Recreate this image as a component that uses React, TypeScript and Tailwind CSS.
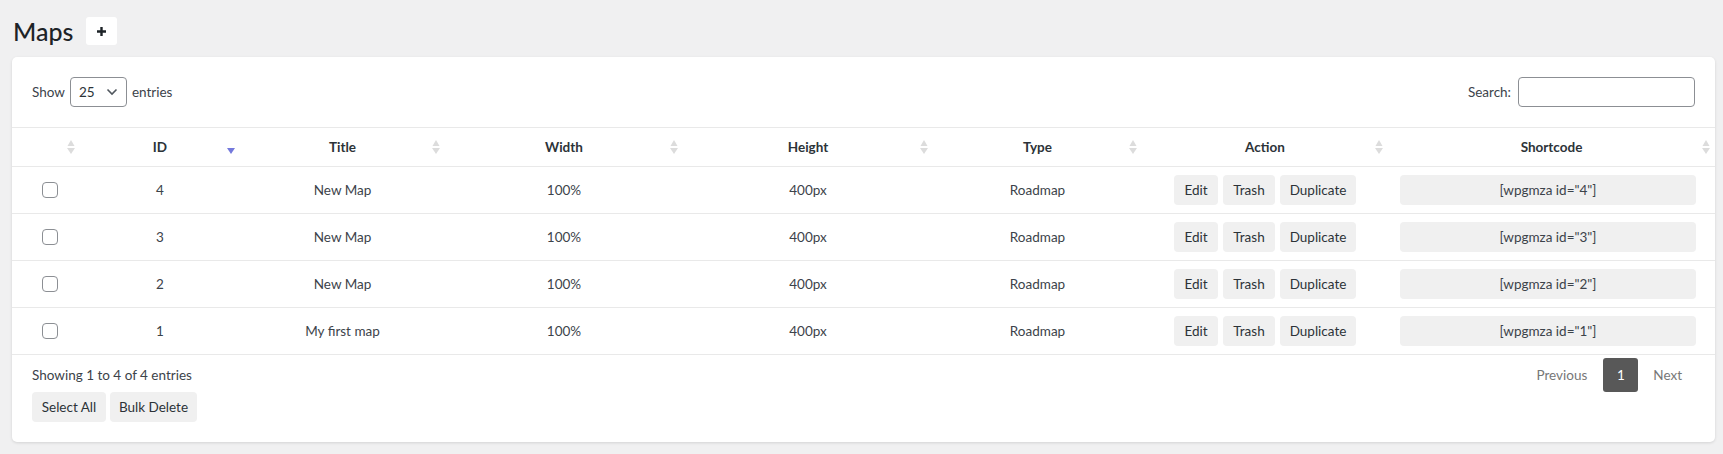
const maps = [
  { id: 4, title: "New Map" },
  { id: 3, title: "New Map" },
  { id: 2, title: "New Map" },
  { id: 1, title: "My first map" },
];

const columns = ["", "ID", "Title", "Width", "Height", "Type", "Action", "Shortcode"];

const grid = "grid grid-cols-[68px_160px_205px_238px_250px_209px_246px_1fr]";

function SortIcon({ active }: { active?: boolean }) {
  return (
    <svg
      width="8"
      height="14"
      viewBox="0 0 8 14"
      className="absolute right-[5px] top-1/2 -translate-y-1/2"
    >
      {!active && <path d="M4 0 L7.5 6 L0.5 6 Z" fill="#dcdcdc" />}
      <path d="M0 8 L8 8 L4 14 Z" fill={active ? "#7479dc" : "#dcdcdc"} />
    </svg>
  );
}

function App() {
  return (
    <div className="min-h-screen bg-[#f0f0f1] font-['Lato',sans-serif] text-[13.5px] text-[#3c434a]">
      <div className="flex items-center gap-[13px] pl-[13px] pt-[17px]">
        <h1 className="text-[25px] font-medium leading-[28px] text-[#1d2327]">Maps</h1>
        <button className="flex h-[28px] w-[31px] items-center justify-center rounded-[3px] bg-white">
          <svg width="11" height="11" viewBox="0 0 11 11">
            <path d="M5.5 1 V10 M1 5.5 H10" stroke="#1d2327" strokeWidth="2.4" />
          </svg>
        </button>
      </div>

      <div className="ml-[12px] mr-[8px] mt-[12px] rounded-[5px] bg-white shadow-[0_1px_3px_rgba(0,0,0,0.12)]">
        <div className="flex items-center justify-between px-[20px] pt-[20px]">
          <div className="flex items-center gap-[5px]">
            <span>Show</span>
            <div className="flex h-[30px] w-[57px] items-center justify-between rounded-[4px] border border-[#8c8f94] pl-[8px] pr-[8px]">
              <span className="text-[#2c3338]">25</span>
              <svg width="12" height="8" viewBox="0 0 12 8">
                <path d="M1.5 1.5 L6 6 L10.5 1.5" fill="none" stroke="#50575e" strokeWidth="1.6" />
              </svg>
            </div>
            <span>entries</span>
          </div>
          <div className="flex items-center gap-[7px]">
            <span>Search:</span>
            <div className="h-[30px] w-[177px] rounded-[4px] border border-[#8c8f94]" />
          </div>
        </div>

        <div className="mt-[20px]">
          <div className={`${grid} h-[40px] border-y border-[#e9e9e9] font-bold text-[#2c3338]`}>
            {columns.map((c, i) => (
              <div key={i} className="relative flex items-center justify-center">
                {c}
                <SortIcon active={c === "ID"} />
              </div>
            ))}
          </div>
          {maps.map((m) => (
            <div key={m.id} className={`${grid} h-[47px] border-b border-[#e9e9e9]`}>
              <div className="flex items-center justify-center pl-[8px]">
                <input
                  type="checkbox"
                  className="h-[16px] w-[16px] appearance-none rounded-[4px] border border-[#8c8f94] bg-white"
                />
              </div>
              <div className="flex items-center justify-center">{m.id}</div>
              <div className="flex items-center justify-center">{m.title}</div>
              <div className="flex items-center justify-center">100%</div>
              <div className="flex items-center justify-center">400px</div>
              <div className="flex items-center justify-center">Roadmap</div>
              <div className="flex items-center justify-center gap-[5px] text-[#2c3338]">
                <button className="h-[30px] w-[44px] rounded-[4px] bg-[#f0f0f0]">Edit</button>
                <button className="h-[30px] w-[52px] rounded-[4px] bg-[#f0f0f0]">Trash</button>
                <button className="h-[30px] w-[76px] rounded-[4px] bg-[#f0f0f0]">Duplicate</button>
              </div>
              <div className="flex items-center pl-[12px] pr-[19px]">
                <div className="flex h-[30px] w-full items-center justify-center rounded-[4px] bg-[#f0f0f0]">
                  [wpgmza id="{m.id}"]
                </div>
              </div>
            </div>
          ))}
        </div>

        <div className="flex justify-between px-[20px] pb-[20px]">
          <div>
            <div className="mt-[10px] leading-[20px]">Showing 1 to 4 of 4 entries</div>
            <div className="mt-[7px] flex gap-[4px] text-[#2c3338]">
              <button className="h-[30px] w-[74px] rounded-[4px] bg-[#f0f0f0]">Select All</button>
              <button className="h-[30px] w-[87px] rounded-[4px] bg-[#f0f0f0]">Bulk Delete</button>
            </div>
          </div>
          <div className="mt-[3px] flex h-[34px] items-center gap-[2px]">
            <span className="px-[14px] text-[#777]">Previous</span>
            <span className="flex h-[34px] w-[35px] items-center justify-center rounded-[3px] bg-[#585858] text-white">
              1
            </span>
            <span className="px-[13px] text-[#777]">Next</span>
          </div>
        </div>
      </div>
    </div>
  );
}

export default App;
